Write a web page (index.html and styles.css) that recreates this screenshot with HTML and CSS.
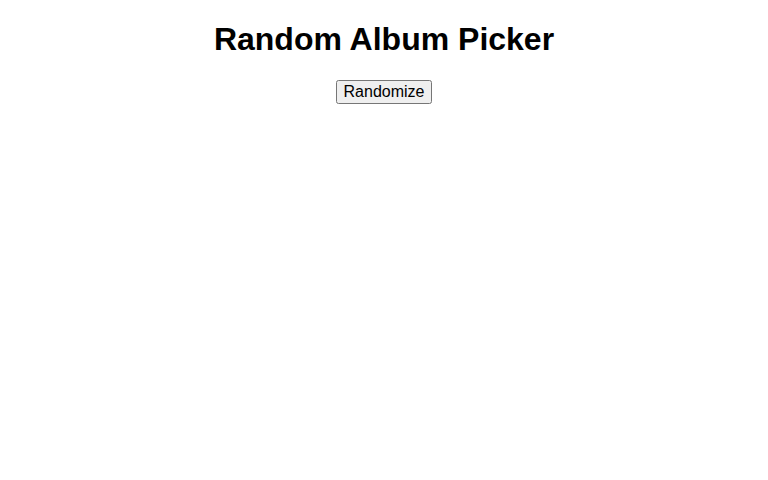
FILE: index.html
```html
<!DOCTYPE html>
<html lang="en">
<head>
  <meta charset="UTF-8">
  <meta name="viewport" content="width=device-width, initial-scale=1.0">
  <title>Random Album Picker</title>
  <link rel="stylesheet" href="styles.css">
</head>
<body>
  <div class="picker">
    <h1>Random Album Picker</h1>
    <button id="randomize-button">Randomize</button>
    <div id="album"></div>
  </div>
</body>
</html>
```

FILE: styles.css
```css
body {
  margin: 0;
  font-family: "Liberation Sans", Arial, sans-serif;
  background-color: #fff;
  color: #000;
}

.picker {
  text-align: center;
}

h1 {
  font-size: 32px;
  margin: 21.44px 0 22px;
}

#randomize-button {
  font-family: "Liberation Sans", Arial, sans-serif;
  font-size: 16px;
}
```
